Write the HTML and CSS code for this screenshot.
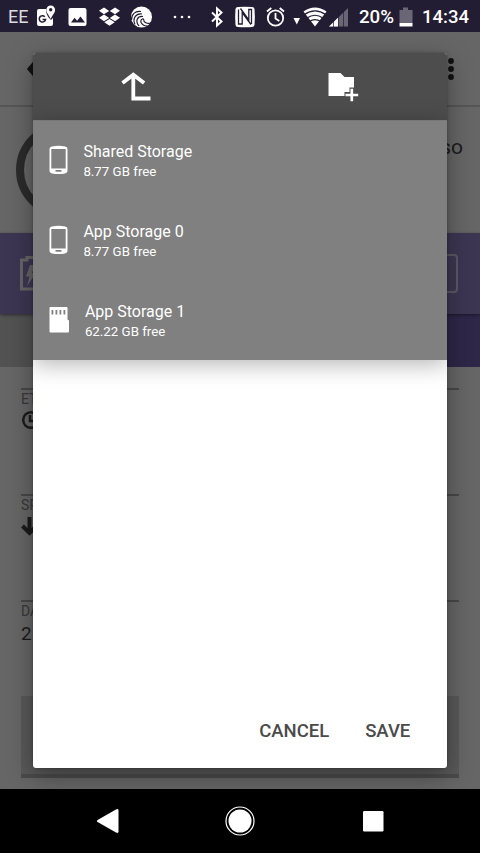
FILE: index.html
```html
<!DOCTYPE html>
<html lang="en">
<head>
<meta charset="utf-8">
<title>Save to storage</title>
<link rel="stylesheet" href="styles.css">
</head>
<body>
<div class="screen">
  <header class="status">
    <span class="carrier">EE</span>
    <svg viewBox="33 0 29 32"><path d="M39 8h7c0 4 1 6 3 9l2 2 2-2v6q0 2-2 2H39q-2 0-2-2V10q0-2 2-2z"/><path d="M50.700 4.500a4.400 4.400 0 0 0-4.400 4.400c0 3 2.600 4.600 4.400 9 1.800-4.400 4.400-6 4.400-9a4.400 4.400 0 0 0-4.400-4.400z"/><circle class="ink" cx="50.700" cy="8.800" r="1.700"/><path class="ink-line thin" d="M44.800 15.700a3.200 3.200 0 1 0 .8 2.800h-3"/></svg>
    <svg viewBox="62 0 32 32"><rect x="68.500" y="7" width="18" height="18" rx="2"/><path class="ink" d="M71 21.500l3.600-4.700 2.500 3 3.400-4.400 4.500 6.100z"/></svg>
    <svg viewBox="94 0 32 32"><path d="M99 9.700l5-3.200 5.200 3.400-5.200 3.300zM120 9.700l-5-3.200-5.200 3.400 5.200 3.300zM99 16.700l5-3.200 5.200 3.400-5.200 3.300zM120 16.700l-5-3.200-5.200 3.400 5.200 3.300zM104.300 21.200l5.200-3.300 5.200 3.300-5.200 3.500z"/></svg>
    <svg viewBox="126 0 34 32"><circle cx="141.500" cy="16" r="10.500"/><path class="ink-line fine" d="M131.500 19c0-6 4-9.500 9.500-8.500M135 23.500c-3-6 1-11.500 7-10.500M139 25c-4-5-2-10 4-9.500M147 25c-6-.5-8.500-6.500-3.500-7.500M151 22c-4 1-7.500-.5-7.500-4"/></svg>
    <svg viewBox="160 0 40 32"><circle cx="175" cy="16" r="1.300"/><circle cx="182" cy="16" r="1.300"/><circle cx="189" cy="16" r="1.300"/></svg>
    <svg viewBox="200 0 30 32"><path class="line" d="M212 11.500l9.500 9-4.500 4v-17l4.500 4-9.500 9"/></svg>
    <svg viewBox="230 0 30 32"><path d="M238 6q7-.7 14 0 2.300 0 2.500 2 .7 8 0 16-.2 2-2.500 2-7 .7-14 0-2.300 0-2.500-2-.7-8 0-16 .2-2 2.500-2z"/><path class="ink-line nfc" d="M238.500 8.500v14.500h3.700V11.500l8.800 12M240.500 7.500l8.300 11.500V8.500h2.700V23"/></svg>
    <svg viewBox="260 0 30 32"><circle class="line slim" cx="275.500" cy="17" r="7.700"/><path class="line slim" d="M275.500 12v5.500l3.800 2.500M267 10.500l4.300-3.500M284 10.500l-4.300-3.500"/></svg>
    <svg viewBox="290 0 12 32"><path d="M293.500 17h6.500l-3.200 6.500z"/></svg>
    <svg viewBox="302 0 26 32"><path d="M303.500 10.500q11.500-8 23 0L315 25.500z"/><path class="ink-line fine" d="M304 13.700q11-7.500 22 0M307 17q8-5.500 16 0M309.500 20.300q5.500-3.500 11 0"/></svg>
    <svg viewBox="328 0 27 32"><path class="dim" d="M329 25.500L348 7v18.500z"/><path d="M329 25.500l9-8.800v8.800z"/><path class="ink-line hair" d="M333.500 7v19M338.500 7v19M343.500 7v19"/></svg>
    <span class="percent">20%</span>
    <svg viewBox="397 0 21 32"><path class="dim" d="M399.500 9h3.500V6.500h5V9h4.500v13h-13z"/><path d="M399.500 22h13v3.500h-13z"/></svg>
    <span class="clock">14:34</span>
  </header>

  <main class="page">
    <div class="toolbar">
      <svg class="back" viewBox="0 0 20 20"><path d="M18 10H4M9 3.500L3.500 10 9 16.500"/></svg>
      <svg class="more" viewBox="0 0 8 24"><circle cx="4" cy="4" r="2.900"/><circle cx="4" cy="12" r="2.900"/><circle cx="4" cy="20" r="2.900"/></svg>
    </div>
    <section class="summary"><div class="ring"></div><span class="name">so</span></section>
    <section class="charge">
      <svg class="battery" viewBox="0 0 24 40"><path class="shell" d="M15 3.500H7V6H1.500v29H24"/><path class="bolt" d="M10 11L6 22.500h3.500L7 32l9-13h-4l3-8z"/></svg>
      <div class="switch"></div>
    </section>
    <div class="tabs"><div></div><div class="active"></div></div>
    <div class="details">
      <section class="detail"><span class="label">ETA</span><svg class="glyph" viewBox="0 0 20 20"><circle cx="10" cy="10" r="7.800"/><path d="M9 5v6h5"/></svg></section>
      <section class="detail"><span class="label">SPEED</span><svg class="glyph arrow" viewBox="0 0 20 20"><path d="M8.500 0v16M1.500 9l7 7 7-7"/></svg></section>
      <section class="detail"><span class="label">DATE</span><span class="value">2</span></section>
    </div>
    <div class="panel"></div>
  </main>

  <nav class="nav">
    <svg viewBox="0 0 32 32"><path d="M7 14.700L25 4.500q2.500-1.200 2.500 1v21q0 2.200-2.500 1L7 17.300q-2.300-1.300 0-2.600z"/></svg>
    <svg viewBox="0 0 32 32"><circle cx="16" cy="16" r="11.500"/><circle class="outline" cx="16" cy="16" r="14"/></svg>
    <svg viewBox="0 0 32 32"><rect x="6" y="6" width="20.500" height="20.500" rx="1.200"/></svg>
  </nav>

  <div class="dialog">
    <div class="dialog-bar">
      <svg viewBox="0 0 32 32"><path class="up" d="M29.500 27.500H12.300V4M1.500 12L12.300 3.700l10.800 8.300"/></svg>
      <svg viewBox="0 0 32 32"><path d="M1.500 2h12l4 4h9.500v10.500h-4.500v4.500h-5v4H1.500z"/><path class="plus" d="M18.500 24H31.200M24.800 17.700V30.300"/></svg>
    </div>
    <div class="places">
      <div class="place">
        <svg viewBox="0 0 20 30"><path fill-rule="evenodd" d="M3 1.500Q10 .2 16 1.500q2.500.4 2.500 2.500v22q0 2-2.500 2.400Q10 29.600 3 28.400.5 28 .5 26V4q0-2.100 2.500-2.500zM2.300 4v19.500h14.400V4z"/><path class="key" d="M6.500 25h6v1.800h-6z"/></svg>
        <div class="text"><span class="title">Shared Storage</span><span class="free">8.77 GB free</span></div>
      </div>
      <div class="place">
        <svg viewBox="0 0 20 30"><path fill-rule="evenodd" d="M3 1.500Q10 .2 16 1.500q2.500.4 2.500 2.500v22q0 2-2.500 2.400Q10 29.600 3 28.400.5 28 .5 26V4q0-2.100 2.500-2.500zM2.300 4v19.500h14.400V4z"/><path class="key" d="M6.500 25h6v1.800h-6z"/></svg>
        <div class="text"><span class="title">App Storage 0</span><span class="free">8.77 GB free</span></div>
      </div>
      <div class="place card">
        <svg viewBox="0 0 20 30"><path d="M1.500 2h16q1 0 1 1v11.500l1.500 1V26.500q0 1-1 1H1.500q-1 0-1-1V3q0-1 1-1z"/><path class="key" d="M2.500 5h1.800v4.500H2.500zM6.500 5h1.800v4.500H6.500zM10.500 5h1.800v4.500h-1.800zM14.500 5h1.800v4.500h-1.800z"/></svg>
        <div class="text"><span class="title">App Storage 1</span><span class="free">62.22 GB free</span></div>
      </div>
    </div>
    <div class="actions"><span>CANCEL</span><span>SAVE</span></div>
  </div>
</div>
</body>
</html>
```
FILE: styles.css
```css
* { box-sizing: border-box; }
body { margin: 0; font-family: Roboto, "Liberation Sans", sans-serif; }
svg { display: block; }
.screen { position: relative; width: 480px; height: 853px; display: flex; flex-direction: column; overflow: hidden; background: #666; }

.status { height: 32px; flex: none; display: grid; grid-template-columns: 33px 29px 32px 32px 34px 40px 30px 30px 30px 12px 26px 27px 42px 21px 62px; align-items: center; background: #231d34; color: #fff; line-height: 32px; }
.status svg { width: 100%; height: 32px; fill: #fff; }
.status .ink { fill: #231d34; }
.status .ink-line { fill: none; stroke: #231d34; stroke-width: 2; }
.status .thin { stroke-width: 1.5; }
.status .fine { stroke-width: 1.200; }
.status .nfc { stroke-width: 1.300; }
.status .hair { stroke-width: .7; }
.status .line { fill: none; stroke: #fff; stroke-width: 2; }
.status .slim { stroke-width: 1.8; }
.status .dim { fill: #6a6675; }
.carrier { padding-left: 8px; padding-top: 1px; font-size: 18px; font-weight: 400; color: #dddce0; }
.percent { padding-left: 4px; padding-top: 1px; font-size: 18.700px; font-weight: 500; }
.clock { padding-left: 4px; padding-top: 1px; font-size: 18.500px; font-weight: 500; }

.page { flex: 1; display: flex; flex-direction: column; }
.toolbar { height: 75px; display: flex; justify-content: space-between; align-items: center; padding: 0 25.500px 0 26px; border-bottom: 2px solid #565656; }
.back { width: 20px; height: 20px; fill: none; stroke: #111; stroke-width: 4; }
.more { width: 8px; height: 24px; fill: #111; margin-top: 1px; }
.summary { height: 126px; display: flex; justify-content: space-between; align-items: flex-start; padding: 15px 17px 0 16px; }
.ring { width: 96px; height: 96px; border: 8px solid #2b2b2b; border-radius: 50%; }
.name { margin-top: 11px; font-size: 21px; line-height: 28px; color: #1b1b1b; }
.charge { height: 81px; display: flex; justify-content: space-between; align-items: center; padding: 0 22px 0 20px; background: #3d3653; box-shadow: 0 1px 3px rgba(0,0,0,.45); z-index: 1; }
.battery { width: 24px; height: 40px; }
.shell { fill: none; stroke: #666; stroke-width: 3; }
.bolt { fill: #666; }
.switch { width: 60px; height: 39px; border: 2px solid #5c5963; border-radius: 4px; }
.tabs { height: 53px; display: grid; grid-template-columns: 1fr 1fr; background: #525252; }
.tabs .active { background: #2e2748; }
.details { display: flex; flex-direction: column; padding: 21px 21px 0; }
.detail { height: 106px; display: flex; flex-direction: column; align-items: flex-start; border-top: 2px solid #484848; }
.label { height: 19px; font-size: 14px; line-height: 18px; color: #383838; }
.glyph { width: 20px; height: 20px; fill: none; stroke: #1b1b1b; stroke-width: 2.5; margin-top: 1px; }
.arrow { stroke-width: 4; margin-top: 2px; }
.value { font-size: 19px; line-height: 24px; margin-top: 1px; color: #1b1b1b; }
.panel { height: 82px; margin: -10px 21px 0; background: #595959; border-bottom: 4px solid #4b4b4b; }

.nav { height: 64px; flex: none; z-index: 3; display: flex; justify-content: center; gap: 101px; align-items: center; background: #000; }
.nav svg { width: 32px; height: 32px; fill: #fff; }
.nav svg:first-child { margin-left: -1px; }
.nav .outline { fill: none; stroke: #fff; stroke-width: 1.2; }

.dialog { position: absolute; z-index: 2; left: 33.4px; top: 53px; width: 413.4px; height: 715px; display: flex; flex-direction: column; overflow: hidden; border-radius: 3px; background: #fff; box-shadow: 0 8px 26px rgba(0,0,0,.36), 0 0 3px rgba(0,0,0,.3); }
.dialog-bar { height: 67px; flex: none; display: grid; grid-template-columns: 1fr 1fr; place-items: center; background: #4d4d4d; }
.dialog-bar svg { width: 32px; height: 32px; fill: #fff; overflow: visible; }
.dialog-bar .up { fill: none; stroke: #fff; stroke-width: 3.800; }
.dialog-bar .plus { fill: none; stroke: #fff; stroke-width: 2.700; }
.places { background: #808080; box-shadow: 0 4px 22px rgba(0,0,0,.3); border-top: 1px solid #787878; }
.place { height: 80px; display: flex; align-items: center; gap: 14.500px; padding: 0 15px 0 15.500px; color: #fff; }
.place:first-child { height: 79px; }
.place svg { width: 20px; height: 30px; fill: #fff; }
.place:first-child svg { margin-top: -1px; }
.key { fill: #808080; }
.text { display: flex; flex-direction: column; padding-top: 2px; }
.title { font-size: 16px; line-height: 20px; }
.free { font-size: 13.300px; line-height: 19px; }
.card .text { padding-left: 1.500px; }
.actions { margin-top: auto; display: flex; justify-content: flex-end; gap: 36px; padding: 0 36.500px 25px 0; font-size: 18.500px; line-height: 24px; font-weight: 500; color: #4a4a4a; }
```
